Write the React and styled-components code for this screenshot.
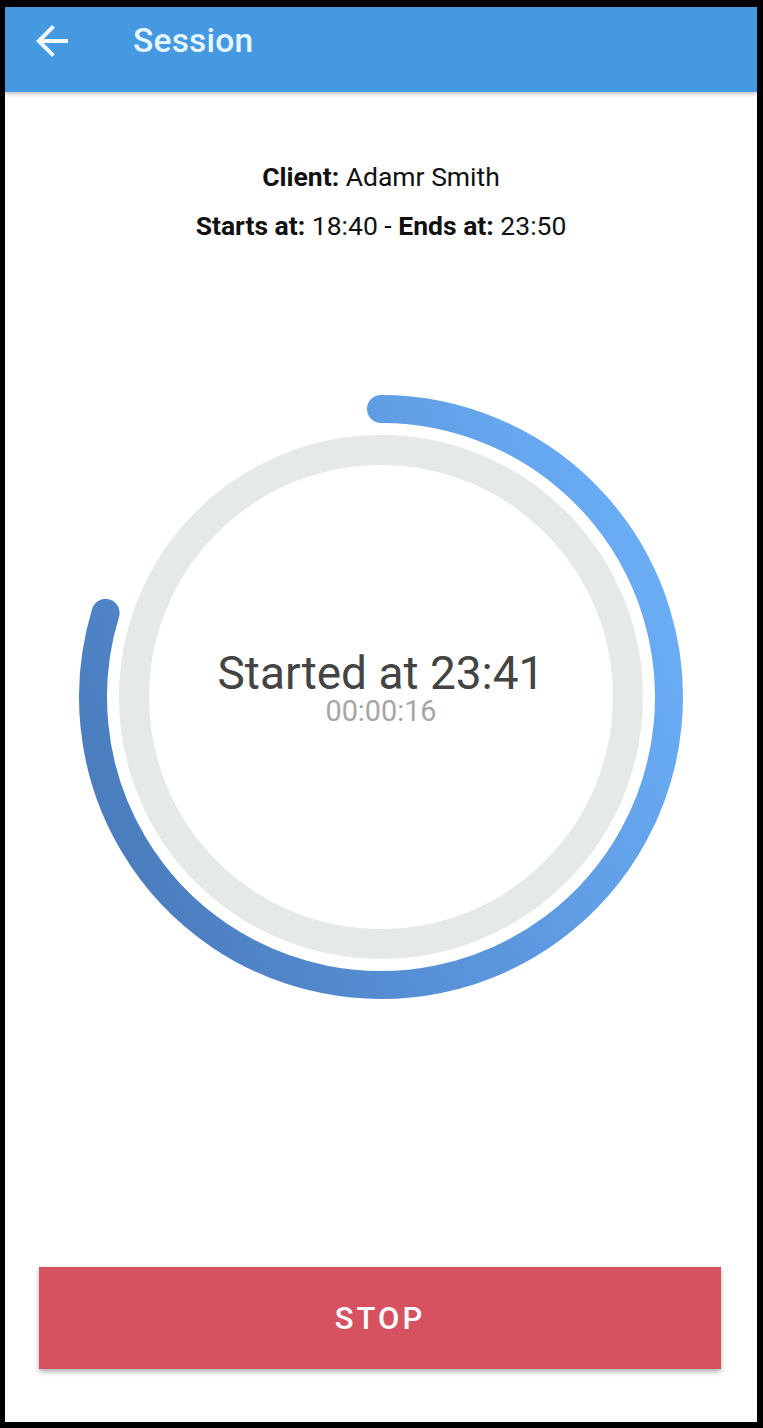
import React from "react"
import styled, { createGlobalStyle } from "styled-components"

const GlobalStyle = createGlobalStyle`
  html, body {
    margin: 0;
    padding: 0;
    background: #000;
  }
  body {
    font-family: Roboto, "Liberation Sans", sans-serif;
  }
`

const RING_SIZE = 620
const CENTER = RING_SIZE / 2
const TRACK_R = 247
const PROGRESS_R = 288

function arcPath(r, degrees) {
    const rad = (degrees - 90) * Math.PI / 180
    const x = CENTER + r * Math.cos(rad)
    const y = CENTER + r * Math.sin(rad)
    const large = degrees > 180 ? 1 : 0
    return `M ${CENTER} ${CENTER - r} A ${r} ${r} 0 ${large} 1 ${x} ${y}`
}

function BackArrow() {
    return (
        <svg width="48" height="48" viewBox="0 0 24 24" fill="#f2f9ff">
            <path d="M20 11H7.83l5.59-5.59L12 4l-8 8 8 8 1.41-1.41L7.83 13H20v-2z" />
        </svg>
    )
}

function App() {
    const progress = 287

    return (
        <>
            <GlobalStyle />
            <Frame>
                <Header>
                    <BackButton aria-label="back">
                        <BackArrow />
                    </BackButton>
                    <Title>Session</Title>
                </Header>

                <Info>
                    <InfoLine><b>Client:</b> Adamr Smith</InfoLine>
                    <InfoLine><b>Starts at:</b> 18:40 - <b>Ends at:</b> 23:50</InfoLine>
                </Info>

                <Dial>
                    <svg width={RING_SIZE} height={RING_SIZE} viewBox={`0 0 ${RING_SIZE} ${RING_SIZE}`}>
                        <defs>
                            <linearGradient id="ringGrad" x1="0" y1="0.7" x2="1" y2="0.3">
                                <stop offset="0" stopColor="#4a7cbd" />
                                <stop offset="0.5" stopColor="#5b95dc" />
                                <stop offset="1" stopColor="#6aaef6" />
                            </linearGradient>
                        </defs>
                        <circle cx={CENTER} cy={CENTER} r={TRACK_R} fill="none" stroke="#e5e9ea" strokeWidth="30" />
                        <path d={arcPath(PROGRESS_R, progress)} fill="none" stroke="url(#ringGrad)" strokeWidth="28" strokeLinecap="round" />
                    </svg>
                    <DialText>
                        <StartedAt>Started at 23:41</StartedAt>
                        <Elapsed>00:00:16</Elapsed>
                    </DialText>
                </Dial>

                <Spacer />

                <StopButton>STOP</StopButton>
            </Frame>
        </>
    )
}
export default App

const Frame = styled.div`
width: 752px;
height: 1415px;
margin: 7px 0 0 5px;
background: #fff;
display: flex;
flex-direction: column;
overflow: hidden;
`
const Header = styled.header`
height: 85px;
box-sizing: border-box;
padding-top: 10px;
flex-shrink: 0;
background: #4499e0;
display: flex;
align-items: flex-start;
box-shadow: 0 2px 4px rgba(0, 0, 0, 0.25);
position: relative;
z-index: 1;
`
const BackButton = styled.button`
border: none;
background: none;
padding: 0;
margin-left: 23px;
width: 48px;
height: 48px;
display: flex;
align-items: center;
justify-content: center;
`
const Title = styled.h1`
margin: 0 0 0 57px;
font-size: 33.5px;
line-height: 48px;
font-weight: 500;
color: #e6f5ff;
letter-spacing: 0.2px;
`
const Info = styled.div`
margin-top: 69px;
display: flex;
flex-direction: column;
align-items: center;
gap: 17px;
`
const InfoLine = styled.p`
margin: 0;
font-size: 26.5px;
line-height: 32px;
color: #111;
b {
  font-weight: 700;
}
`
const Dial = styled.div`
margin-top: 145px;
display: grid;
place-items: center;
> * {
  grid-area: 1 / 1;
}
`
const DialText = styled.div`
display: flex;
flex-direction: column;
align-items: center;
margin-bottom: 19px;
`
const StartedAt = styled.div`
font-size: 46px;
line-height: 46px;
color: #444;
`
const Elapsed = styled.div`
font-size: 28.8px;
line-height: 30px;
color: #a6a6a6;
`
const Spacer = styled.div`
flex: 1;
`
const StopButton = styled.button`
margin: 0 36px 53px 34px;
height: 102px;
flex-shrink: 0;
border: none;
background: #d75261;
color: #fff;
font-family: Roboto, "Liberation Sans", sans-serif;
font-size: 31px;
font-weight: 500;
letter-spacing: 3px;
box-shadow: 0 3px 5px rgba(0, 0, 0, 0.3);
`
